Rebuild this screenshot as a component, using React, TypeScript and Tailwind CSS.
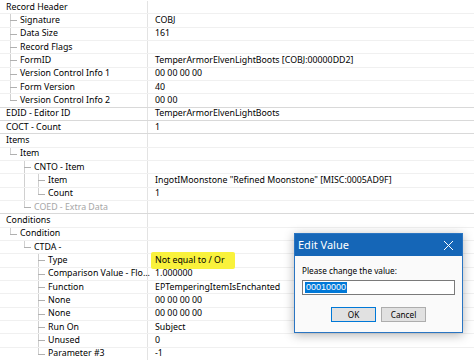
import React from "react";

type Row = { label: string; value?: string; level: number; muted?: boolean; mark?: boolean };

const rows: Row[] = [
  { label: "Record Header", level: 0 },
  { label: "Signature", value: "COBJ", level: 1 },
  { label: "Data Size", value: "161", level: 1 },
  { label: "Record Flags", level: 1 },
  { label: "FormID", value: "TemperArmorElvenLightBoots [COBJ:00000DD2]", level: 1 },
  { label: "Version Control Info 1", value: "00 00 00 00", level: 1 },
  { label: "Form Version", value: "40", level: 1 },
  { label: "Version Control Info 2", value: "00 00", level: 1 },
  { label: "EDID - Editor ID", value: "TemperArmorElvenLightBoots", level: 0 },
  { label: "COCT - Count", value: "1", level: 0 },
  { label: "Items", level: 0 },
  { label: "Item", level: 1 },
  { label: "CNTO - Item", level: 2 },
  { label: "Item", value: 'IngotIMoonstone "Refined Moonstone" [MISC:0005AD9F]', level: 3 },
  { label: "Count", value: "1", level: 3 },
  { label: "COED - Extra Data", level: 2, muted: true },
  { label: "Conditions", level: 0 },
  { label: "Condition", level: 1 },
  { label: "CTDA -", level: 2 },
  { label: "Type", value: "Not equal to / Or", level: 3, mark: true },
  { label: "Comparison Value - Flo...", value: "1.000000", level: 3 },
  { label: "Function", value: "EPTemperingItemIsEnchanted", level: 3 },
  { label: "None", value: "00 00 00 00", level: 3 },
  { label: "None", value: "00 00 00 00", level: 3 },
  { label: "Run On", value: "Subject", level: 3 },
  { label: "Unused", value: "0", level: 3 },
  { label: "Parameter #3", value: "-1", level: 3 },
];

// true when row i still has a later sibling at its own level
const hasNext = (i: number) => {
  const lvl = rows[i].level;
  for (let j = i + 1; j < rows.length; j++) {
    if (rows[j].level < lvl) return false;
    if (rows[j].level === lvl) return true;
  }
  return false;
};

const ancestorAt = (i: number, lvl: number) => {
  for (let j = i; j >= 0; j--) if (rows[j].level === lvl) return j;
  return -1;
};

const Guide = ({ i, slot }: { i: number; slot: number }) => {
  const row = rows[i];
  const isLink = slot === row.level - 1;
  const owner = isLink ? i : ancestorAt(i, slot + 1);
  const more = owner >= 0 && hasNext(owner);
  return (
    <span className="relative w-[14px] h-full shrink-0">
      {isLink ? (
        <>
          <span className={`absolute left-[4px] top-0 w-px bg-[#d0d0d0] ${more ? "h-full" : "h-1/2"}`} />
          <span className="absolute left-[4px] top-1/2 h-px w-[7px] bg-[#b0b0b0]" />
        </>
      ) : more ? (
        <span className="absolute left-[4px] top-0 w-px h-full bg-[#d0d0d0]" />
      ) : null}
    </span>
  );
};

export default function App() {
  return (
    <div className="relative w-[474px] h-[360px] overflow-hidden bg-white text-[8.8px] text-black" style={{ fontFamily: '"Noto Sans", "Open Sans", sans-serif' }}>
      <div className="pt-px">
        {rows.map((r, i) => (
          <div
            key={i}
            className={`flex h-[13.33px] border-b ${rows[i + 1]?.level === 0 ? "border-[#d9d9d9]" : "border-[#f0f0f0]"}`}
          >
            <div className="flex items-center w-[148px] shrink-0 h-full pl-[6px] border-r border-[#e3e3e3]">
              {Array.from({ length: r.level }).map((_, s) => (
                <Guide key={s} i={i} slot={s} />
              ))}
              <span className={`whitespace-nowrap leading-none ${r.muted ? "text-[#a6a6a6]" : ""}`}>{r.label}</span>
            </div>
            <div className="flex items-center pl-[7px] h-full whitespace-nowrap leading-none">
              {r.mark ? (
                <span className="bg-[#f9f23c] pl-[4px] pr-[10px] -ml-[4px] py-[4px] rounded-[2px]">{r.value}</span>
              ) : (
                r.value
              )}
            </div>
          </div>
        ))}
      </div>

      <div className="absolute left-[294px] top-[233px] w-[169px] h-[100px] flex flex-col bg-[#fafafa] border border-[#2a75c2] shadow-[0_2px_10px_rgba(0,0,0,0.3)]">
        <div className="flex items-center justify-between h-[22px] bg-[#1566b7] text-white pl-[3px] pr-[8px] shrink-0">
          <span className="text-[11px]">Edit Value</span>
          <svg width="11" height="11" viewBox="0 0 11 11" stroke="white" strokeWidth="1">
            <path d="M1 1L10 10M10 1L1 10" />
          </svg>
        </div>
        <div className="flex flex-col px-[7px] pt-[11px]">
          <span className="text-[8.2px] leading-none">Please change the value:</span>
          <div className="mt-[5px] h-[15px] bg-white border border-[#7a7a7a] flex items-center pl-[2px]">
            <span className="bg-[#0078d7] text-white text-[9px] leading-[11px] px-px" style={{ fontFamily: '"Liberation Sans", sans-serif' }}>00010000</span>
          </div>
          <div className="flex justify-center gap-[5px] mt-[12px]">
            <button className="w-[45px] h-[15px] bg-[#e1e1e1] border border-[#0078d7] text-[8.2px] leading-none">OK</button>
            <button className="w-[45px] h-[15px] bg-[#e1e1e1] border border-[#adadad] text-[8.2px] leading-none">Cancel</button>
          </div>
        </div>
      </div>
    </div>
  );
}
